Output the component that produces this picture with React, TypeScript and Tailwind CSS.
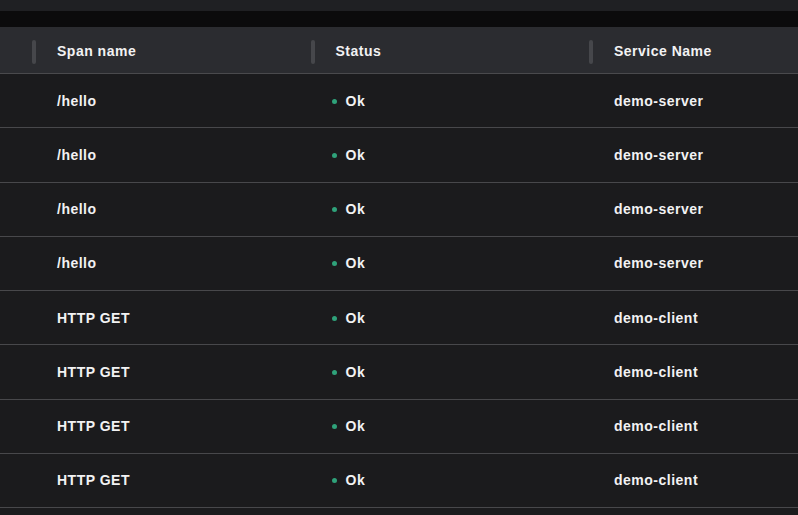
const ROWS = [
  { name: "/hello", status: "Ok", service: "demo-server" },
  { name: "/hello", status: "Ok", service: "demo-server" },
  { name: "/hello", status: "Ok", service: "demo-server" },
  { name: "/hello", status: "Ok", service: "demo-server" },
  { name: "HTTP GET", status: "Ok", service: "demo-client" },
  { name: "HTTP GET", status: "Ok", service: "demo-client" },
  { name: "HTTP GET", status: "Ok", service: "demo-client" },
  { name: "HTTP GET", status: "Ok", service: "demo-client" },
];

const COLUMNS = ["Span name", "Status", "Service Name"];

function HeaderCell({ label, last }: { label: string; last?: boolean }) {
  return (
    <div className={`flex items-center ${last ? "flex-1" : "w-[278.5px]"}`}>
      <div className="h-6 w-1 rounded-sm bg-[#46474b]" />
      <span className="pl-[21px]">{label}</span>
    </div>
  );
}

export default function App() {
  return (
    <div
      className="h-[515px] w-[798px] overflow-hidden bg-[#1b1b1d] text-[14px] font-bold tracking-[0.5px] text-[#f2f2f3]"
      style={{ fontFamily: '"Liberation Sans", Arial, sans-serif' }}
    >
      <div className="h-[11px] bg-[#1f2023]" />
      <div className="h-4 bg-[#0b0b0c]" />

      <div className="flex h-[47px] border-b border-[#4a4a4d] bg-[#2b2c30] pt-[3px]">
        <div className="w-8 shrink-0" />
        {COLUMNS.map((c, i) => (
          <HeaderCell key={c} label={c} last={i === COLUMNS.length - 1} />
        ))}
      </div>

      {ROWS.map((r, i) => (
        <div
          key={i}
          className="flex h-[54.25px] items-center border-b border-[#48484b] pt-px"
        >
          <div className="w-8 shrink-0" />
          <div className="w-[278.5px] pl-[25px]">{r.name}</div>
          <div className="flex w-[278.5px] items-center pl-[21px]">
            <span className="mr-[9px] h-[5px] w-[5px] rounded-full bg-[#2fa27a]" />
            <span>{r.status}</span>
          </div>
          <div className="flex-1 pl-[25px]">{r.service}</div>
        </div>
      ))}
    </div>
  );
}
